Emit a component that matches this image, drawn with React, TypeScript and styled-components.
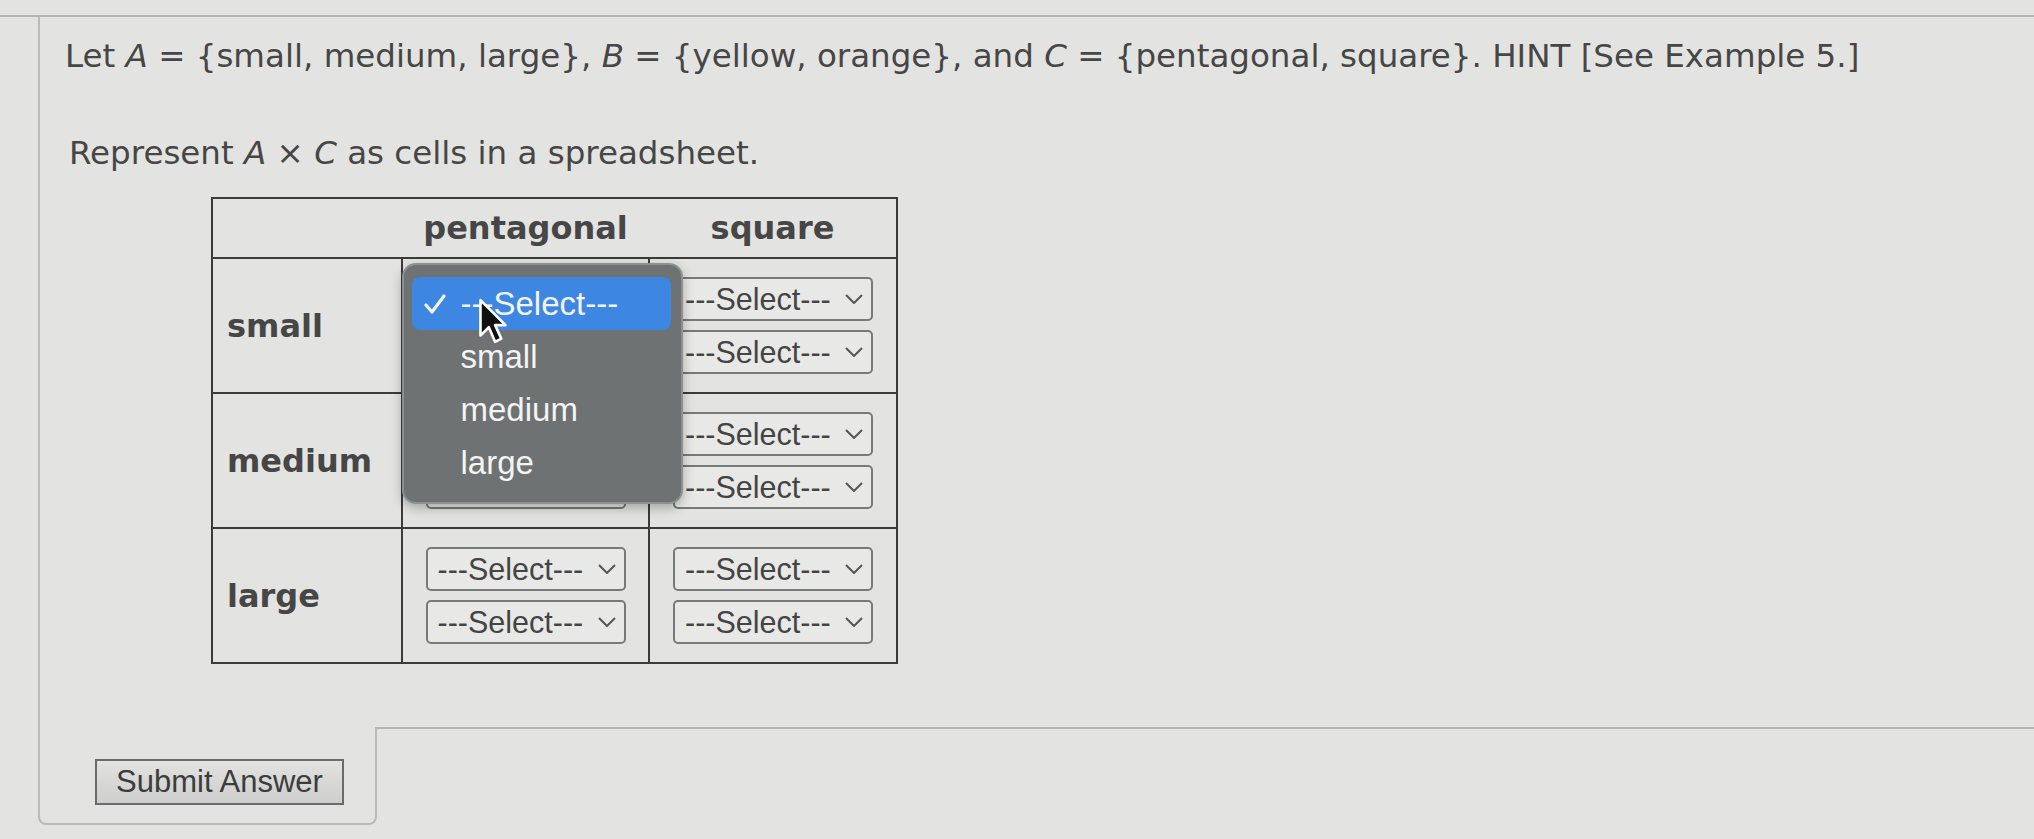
import React from "react";
import styled, { createGlobalStyle } from "styled-components";

const GlobalStyle = createGlobalStyle`
  html, body {
    margin: 0;
    padding: 0;
    background: #e3e4e2;
  }
  body {
    font-family: "DejaVu Sans", Verdana, sans-serif;
    color: #464646;
  }
`;

const Page = styled.div`
  margin-top: 15px;
  border-top: 2px solid #b4b6b4;
  padding-left: 38px;
  min-height: 820px;
  box-sizing: border-box;
  display: flex;
  flex-direction: column;
`;

const Question = styled.div`
  border-left: 2px solid #b9bbb9;
  padding: 19px 0 63px 25px;
`;

const Prompt = styled.p`
  margin: 0;
  font-size: 32.5px;
  line-height: 40px;
  white-space: nowrap;
`;

const Sub = styled(Prompt)`
  margin-top: 57px;
  padding-left: 4px;
`;

const Var = styled.i`
  font-style: italic;
`;

const Grid = styled.table`
  margin: 24px 0 0 146px;
  border-collapse: collapse;
  width: 685px;
  table-layout: fixed;
`;

const HeadCell = styled.th`
  height: 58px;
  border-top: 2px solid #3b3b3b;
  border-bottom: 2px solid #3b3b3b;
  font-size: 32px;
  font-weight: bold;
  text-align: center;
  padding: 0;
  &:first-child {
    border-left: 2px solid #3b3b3b;
  }
  &:last-child {
    border-right: 2px solid #3b3b3b;
  }
`;

const Label = styled.td`
  height: 133px;
  border: 2px solid #3b3b3b;
  padding: 0 0 0 14px;
  font-size: 32px;
  font-weight: bold;
  vertical-align: middle;
`;

const Cell = styled.td`
  border: 2px solid #3b3b3b;
  padding: 0;
  vertical-align: middle;
`;

const Stack = styled.div`
  display: flex;
  flex-direction: column;
  align-items: center;
  gap: 9px;
`;

const Anchor = styled.div`
  position: relative;
  z-index: 2;
`;

const SelectBox = styled.div`
  width: 200px;
  height: 44px;
  box-sizing: border-box;
  border: 2px solid #777a78;
  border-radius: 5px;
  background: #e8e9e7;
  display: flex;
  align-items: center;
  justify-content: space-between;
  padding: 0 8px 0 10px;
  font-family: "Liberation Sans", Arial, sans-serif;
  font-size: 30.5px;
  color: #444;
`;

const Popup = styled.div`
  position: absolute;
  left: -24px;
  top: -14px;
  width: 281px;
  box-sizing: border-box;
  padding: 12px 10px 13px 8px;
  background: #6e7273;
  border: 2px solid #8c9091;
  border-radius: 14px;
  box-shadow: 0 4px 12px rgba(0, 0, 0, 0.28);
`;

const Option = styled.div<{ $active?: boolean }>`
  height: 53px;
  display: flex;
  align-items: center;
  border-radius: 8px;
  background: ${(p) => (p.$active ? "#3d86e1" : "transparent")};
  font-family: "Liberation Sans", Arial, sans-serif;
  font-size: 33px;
  color: #f3f4f4;
`;

const CheckSlot = styled.span`
  width: 49px;
  box-sizing: border-box;
  padding-left: 12px;
  display: flex;
  align-items: center;
`;

const Pointer = styled.svg`
  position: absolute;
  left: 74px;
  top: 33px;
`;

const Footer = styled.div`
  display: flex;
`;

const SubmitBox = styled.div`
  width: 339px;
  box-sizing: border-box;
  height: 98px;
  border: 2px solid #b9bbb9;
  border-top: none;
  border-radius: 0 0 8px 8px;
  padding: 32px 0 0 55px;
`;

const Filler = styled.div`
  flex: 1;
  border-top: 2px solid #b4b6b4;
  margin-left: -2px;
`;

const SubmitButton = styled.button`
  width: 249px;
  height: 46px;
  padding: 0;
  border: 2px solid #6a6c6b;
  background: linear-gradient(#e2e2e1, #cdcecd);
  font-family: "Liberation Sans", Arial, sans-serif;
  font-size: 31px;
  color: #3c3c3c;
`;

const Chevron = () => (
  <svg width="18" height="10" viewBox="0 0 18 10">
    <polyline points="1,1 9,9 17,1" fill="none" stroke="#555" strokeWidth="2" />
  </svg>
);

const Select = () => (
  <SelectBox>
    <span>---Select---</span>
    <Chevron />
  </SelectBox>
);

const rows = ["small", "medium", "large"];
const options = ["small", "medium", "large"];

function App() {
  return (
    <>
      <GlobalStyle />
      <Page>
        <Question>
          <Prompt>
            Let <Var>A</Var> = {"{"}small, medium, large{"}"}, <Var>B</Var> = {"{"}yellow, orange{"}"}, and{" "}
            <Var>C</Var> = {"{"}pentagonal, square{"}"}. HINT [See Example 5.]
          </Prompt>
          <Sub>
            Represent <Var>A</Var> × <Var>C</Var> as cells in a spreadsheet.
          </Sub>
          <Grid>
            <colgroup>
              <col style={{ width: 190 }} />
              <col style={{ width: 247 }} />
              <col style={{ width: 248 }} />
            </colgroup>
            <thead>
              <tr>
                <HeadCell />
                <HeadCell>pentagonal</HeadCell>
                <HeadCell>square</HeadCell>
              </tr>
            </thead>
            <tbody>
              {rows.map((r, i) => (
                <tr key={r}>
                  <Label>{r}</Label>
                  <Cell>
                    <Stack>
                      {i === 0 ? (
                        <Anchor>
                          <Select />
                          <Popup>
                            <Option $active>
                              <CheckSlot>
                                <svg width="22" height="20" viewBox="0 0 22 20">
                                  <polyline
                                    points="2,11 8,18 20,2"
                                    fill="none"
                                    stroke="#f3f4f4"
                                    strokeWidth="3.2"
                                    strokeLinecap="round"
                                    strokeLinejoin="round"
                                  />
                                </svg>
                              </CheckSlot>
                              ---Select---
                            </Option>
                            {options.map((o) => (
                              <Option key={o}>
                                <CheckSlot />
                                {o}
                              </Option>
                            ))}
                            <Pointer width="30" height="48" viewBox="0 0 28 46">
                              <path
                                d="M2 2 L2 36 L10 28 L16 42 L22 39 L16 26 L26 26 Z"
                                fill="#111"
                                stroke="#fff"
                                strokeWidth="2.5"
                                strokeLinejoin="round"
                              />
                            </Pointer>
                          </Popup>
                        </Anchor>
                      ) : (
                        <Select />
                      )}
                      <Select />
                    </Stack>
                  </Cell>
                  <Cell>
                    <Stack>
                      <Select />
                      <Select />
                    </Stack>
                  </Cell>
                </tr>
              ))}
            </tbody>
          </Grid>
        </Question>
        <Footer>
          <SubmitBox>
            <SubmitButton>Submit Answer</SubmitButton>
          </SubmitBox>
          <Filler />
        </Footer>
      </Page>
    </>
  );
}

export default App;
